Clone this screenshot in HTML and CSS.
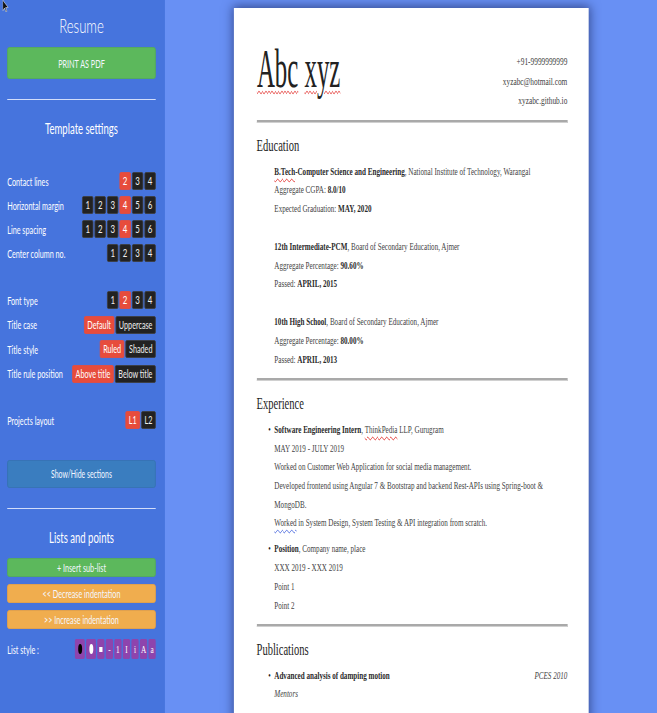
FILE: index.html
```html
<!DOCTYPE html>
<html lang="en">
<head>
<meta charset="utf-8">
<title>Resume</title>
<link rel="stylesheet" href="styles.css">
</head>
<body>
<div class="stage">
  <svg class="cursor" width="9" height="12" viewBox="0 0 9 12"><path d="M0 0 L0 11 L3 8 L5 12 L6.5 11.3 L4.6 7.5 L8.5 7.5 Z" fill="#111" stroke="#fff" stroke-width="0.6"/></svg>
  <aside class="sidebar">
    <h1 class="side-title">Resume</h1>
    <div class="btn btn-green btn-print">PRINT AS PDF</div>
    <hr class="side-rule">
    <h2 class="side-heading">Template settings</h2>

    <div class="group group-first">
      <div class="row"><span class="label">Contact lines</span><div class="opts"><span class="opt num on">2</span><span class="opt num">3</span><span class="opt num">4</span></div></div>
      <div class="row"><span class="label">Horizontal margin</span><div class="opts"><span class="opt num">1</span><span class="opt num">2</span><span class="opt num">3</span><span class="opt num on">4</span><span class="opt num">5</span><span class="opt num">6</span></div></div>
      <div class="row"><span class="label">Line spacing</span><div class="opts"><span class="opt num">1</span><span class="opt num">2</span><span class="opt num">3</span><span class="opt num on">4</span><span class="opt num">5</span><span class="opt num">6</span></div></div>
      <div class="row"><span class="label">Center column no.</span><div class="opts"><span class="opt num">1</span><span class="opt num">2</span><span class="opt num">3</span><span class="opt num">4</span></div></div>
    </div>

    <div class="group group-second">
      <div class="row"><span class="label">Font type</span><div class="opts"><span class="opt num">1</span><span class="opt num on">2</span><span class="opt num">3</span><span class="opt num">4</span></div></div>
      <div class="row"><span class="label">Title case</span><div class="opts"><span class="opt on">Default</span><span class="opt">Uppercase</span></div></div>
      <div class="row"><span class="label">Title style</span><div class="opts"><span class="opt on">Ruled</span><span class="opt">Shaded</span></div></div>
      <div class="row"><span class="label">Title rule position</span><div class="opts"><span class="opt on">Above title</span><span class="opt">Below title</span></div></div>
    </div>

    <div class="row row-projects"><span class="label">Projects layout</span><div class="opts"><span class="opt on">L1</span><span class="opt">L2</span></div></div>

    <div class="btn btn-blue btn-sections">Show/Hide sections</div>
    <hr class="side-rule">
    <h2 class="side-heading">Lists and points</h2>
    <div class="btn btn-green btn-small btn-insert">+ Insert sub-list</div>
    <div class="btn btn-orange btn-small">&lt;&lt; Decrease indentation</div>
    <div class="btn btn-orange btn-small">&gt;&gt; Increase indentation</div>

    <div class="row row-list">
      <span class="label">List style :</span>
      <div class="opts purple-opts">
        <span class="popt wide"><span class="dot dot-black"></span></span>
        <span class="popt wide"><span class="dot dot-white"></span></span>
        <span class="popt"><span class="sq"></span></span>
        <span class="popt">-</span>
        <span class="popt">1</span>
        <span class="popt">I</span>
        <span class="popt">i</span>
        <span class="popt">A</span>
        <span class="popt">a</span>
      </div>
    </div>
  </aside>

  <main class="main">
    <article class="paper">
      <header class="doc-header">
        <h1 class="name"><span class="spell">Abc</span> <span class="spell">xyz</span></h1>
        <div class="contacts">
          <div>+91-9999999999</div>
          <div>xyzabc@hotmail.com</div>
          <div>xyzabc.github.io</div>
        </div>
      </header>

      <div class="rule"></div>
      <section class="section">
        <h2 class="sec-title">Education</h2>
        <div class="entry">
          <div><b><span class="spell">B.Tech</span>-Computer Science and Engineering</b>, National Institute of Technology, Warangal</div>
          <div>Aggregate CGPA: <b>8.0/10</b></div>
          <div>Expected Graduation: <b>MAY, 2020</b></div>
        </div>
        <div class="entry">
          <div><b>12th Intermediate-PCM</b>, Board of Secondary Education, Ajmer</div>
          <div>Aggregate Percentage: <b>90.60%</b></div>
          <div>Passed: <b>APRIL, 2015</b></div>
        </div>
        <div class="entry">
          <div><b>10th High School</b>, Board of Secondary Education, Ajmer</div>
          <div>Aggregate Percentage: <b>80.00%</b></div>
          <div>Passed: <b>APRIL, 2013</b></div>
        </div>
      </section>

      <div class="rule"></div>
      <section class="section">
        <h2 class="sec-title">Experience</h2>
        <ul class="items">
          <li>
            <div><b>Software Engineering Intern</b>, <span class="spell">ThinkPedia</span> LLP, Gurugram</div>
            <div>MAY 2019 - JULY 2019</div>
            <div>Worked on Customer Web Application for social media management.</div>
            <div>Developed frontend using Angular 7 &amp; Bootstrap and backend Rest-APIs using Spring-boot &amp; MongoDB.</div>
            <div><span class="grammar">Worked</span> in System Design, System Testing &amp; API integration from scratch.</div>
          </li>
          <li>
            <div><b>Position</b>, Company name, place</div>
            <div>XXX 2019 - XXX 2019</div>
            <div>Point 1</div>
            <div>Point 2</div>
          </li>
        </ul>
      </section>

      <div class="rule"></div>
      <section class="section">
        <h2 class="sec-title">Publications</h2>
        <ul class="items">
          <li>
            <div class="pub-row"><b>Advanced analysis of damping motion</b><i>PCES 2010</i></div>
            <div><i>Mentors</i></div>
          </li>
        </ul>
      </section>
    </article>
  </main>
</div>
</body>
</html>
```

FILE: styles.css
```css
html, body {
  margin: 0;
  padding: 0;
  overflow: hidden;
  background: #6890f4;
}

/* The reference is a horizontally compressed capture: the page is laid out
   at 1000px and squeezed to the 657px window. */
.stage {
  position: relative;
  width: 1000px;
  height: 713px;
  display: flex;
  transform: scaleX(0.657);
  transform-origin: 0 0;
}

.cursor {
  position: absolute;
  left: 4px;
  top: 0;
}

/* ---------- Sidebar ---------- */
.sidebar {
  width: 251px;
  flex-shrink: 0;
  box-sizing: border-box;
  padding: 0 14px 0 11px;
  background: #4674dd;
  color: #fff;
  font-family: Lato, "Liberation Sans", sans-serif;
}

.side-title {
  margin: 13px 0 10px;
  font-size: 20px;
  line-height: 24px;
  font-weight: 300;
  text-align: center;
}

.btn {
  box-sizing: border-box;
  display: flex;
  align-items: center;
  justify-content: center;
  border-radius: 3px;
  color: #f4f7ff;
  font-size: 11px;
  white-space: nowrap;
}

.btn-print {
  height: 32px;
}

.btn-green {
  background: #5cb85c;
  border: 1px solid #55ad55;
}

.btn-blue {
  background: #3a7dbf;
  border: 1px solid #3572b0;
  font-size: 10.5px;
}

.btn-orange {
  background: #f0ad4e;
  border: 1px solid #eea440;
  margin-top: 7px;
}

.btn-small {
  height: 19px;
}

.btn-sections {
  height: 28px;
  margin-top: 31px;
}

.btn-insert {
  margin-top: 10px;
}

.side-rule {
  margin: 20px 0 0;
  border: 0;
  border-top: 1px solid rgba(235, 240, 255, 0.85);
  height: 0;
}

.side-heading {
  margin: 19px 0 0;
  font-size: 14.5px;
  line-height: 20px;
  font-weight: 400;
  text-align: center;
}

.group {
  display: flex;
  flex-direction: column;
}

.group-first {
  margin-top: 33px;
  gap: 6px;
}

.group-second {
  margin-top: 29px;
  gap: 6.5px;
}

.row {
  display: flex;
  justify-content: space-between;
  align-items: center;
  height: 18px;
  white-space: nowrap;
}

.row-projects {
  margin-top: 28.5px;
}

.label {
  font-size: 11px;
  color: #fff;
}

.opts {
  display: flex;
  flex-shrink: 0;
  gap: 2px;
}

.opt {
  box-sizing: border-box;
  height: 18px;
  padding: 0 4px;
  background: #222;
  border: 1px solid #3d3d3d;
  border-radius: 2px;
  color: #eee;
  font-size: 11px;
  line-height: 16px;
  text-align: center;
}

.opt.num {
  width: 17px;
  padding: 0;
  font-size: 12px;
}

.opt.on {
  background: #e74c3c;
  border-color: #e74c3c;
  color: #fff;
}

.row-list {
  margin-top: 10px;
  height: 20px;
}

.purple-opts {
  gap: 2px;
}

.popt {
  box-sizing: border-box;
  width: 11px;
  height: 20px;
  display: flex;
  align-items: center;
  justify-content: center;
  background: #8e44ad;
  border-radius: 2px;
  color: #fff;
  font-family: "Liberation Serif", serif;
  font-size: 11px;
}

.popt.wide {
  width: 15px;
}

.dot {
  width: 6px;
  height: 10px;
  border-radius: 50%;
}

.dot-black {
  background: #000;
}

.dot-white {
  background: #fff;
}

.sq {
  width: 5px;
  height: 5px;
  background: #fff;
}

/* ---------- Resume paper ---------- */
.main {
  flex: 1;
  display: flex;
  justify-content: center;
  align-items: flex-start;
  padding-top: 8px;
}

.paper {
  width: 540px;
  min-height: 900px;
  box-sizing: border-box;
  padding: 34px 32px 0 35px;
  background: #fff;
  box-shadow: 0 0 12px 2px rgba(20, 30, 80, 0.6);
  font-family: "Liberation Serif", "Times New Roman", serif;
  color: #444;
}

.doc-header {
  display: flex;
  justify-content: space-between;
  align-items: flex-start;
  padding-bottom: 9px;
}

.name {
  margin: 0;
  font-size: 54px;
  line-height: 54px;
  font-weight: normal;
  color: #222;
  transform: scaleX(0.7);
  transform-origin: left center;
}

.contacts {
  margin-top: 10px;
  text-align: right;
  font-size: 11.2px;
  line-height: 19.5px;
  color: #3c3c3c;
}

.spell {
  text-decoration: underline wavy #e0201c;
  text-decoration-thickness: 1px;
  text-underline-offset: 3px;
}

.grammar {
  text-decoration: underline wavy #3b5bdb;
  text-decoration-thickness: 1px;
  text-underline-offset: 3px;
}

.rule {
  height: 3px;
  background: #a9a9a9;
  border-bottom: 1px solid #d0d0d0;
  box-sizing: border-box;
}

.section {
  padding-bottom: 9.5px;
}

.sec-title {
  margin: 12.5px 0 4.5px;
  font-size: 16px;
  line-height: 22px;
  font-weight: normal;
  color: #1e1e1e;
}

.entry {
  padding-left: 27px;
  font-size: 10.8px;
  line-height: 18.7px;
}

.entry + .entry {
  margin-top: 19.3px;
}

b {
  color: #2a2a2a;
}

.items {
  margin: 0;
  padding-left: 27px;
  list-style: disc;
  font-size: 10.8px;
  line-height: 18.7px;
}

.items li + li {
  margin-top: 7.3px;
}

.items li::marker {
  content: "\2022\00a0\00a0";
  color: #222;
}

.pub-row {
  display: flex;
  justify-content: space-between;
}
```
